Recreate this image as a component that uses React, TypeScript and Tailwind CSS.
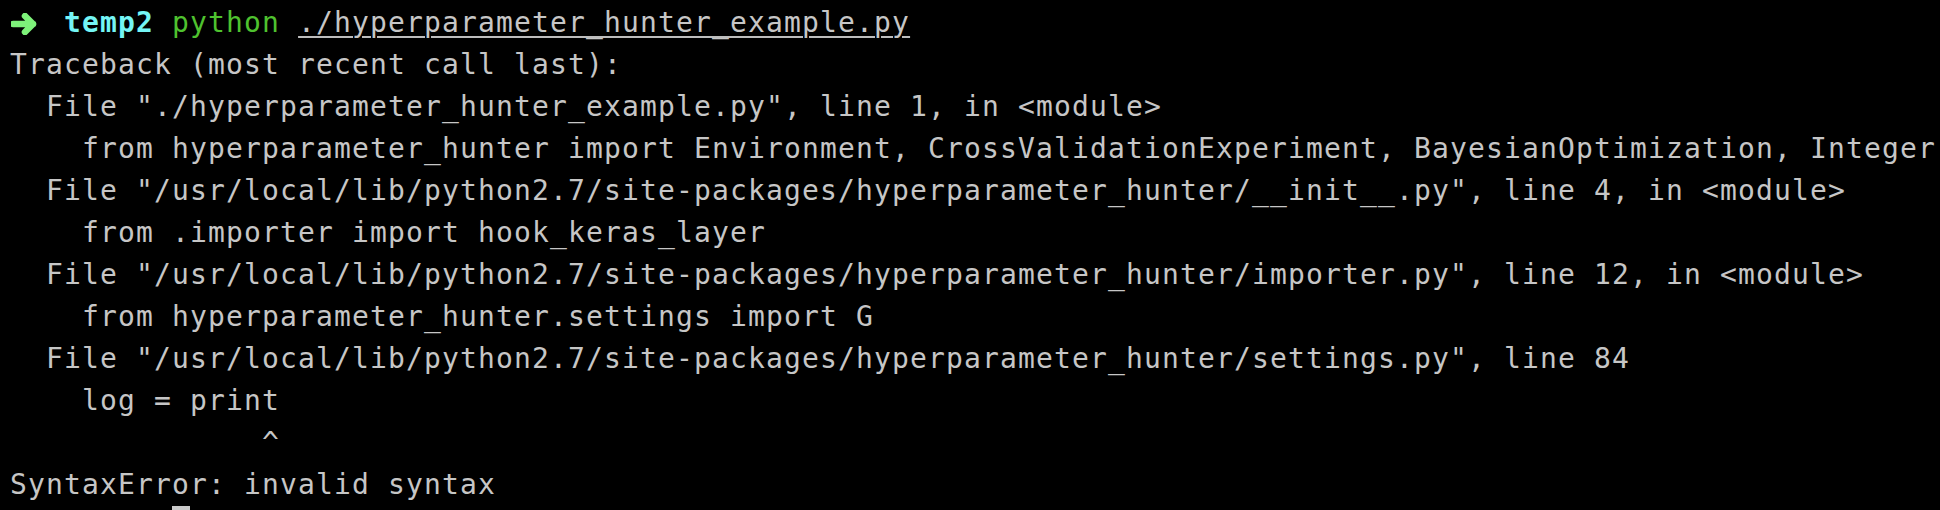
import React from "react";

const lines: string[] = [
  "Traceback (most recent call last):",
  '  File "./hyperparameter_hunter_example.py", line 1, in <module>',
  "    from hyperparameter_hunter import Environment, CrossValidationExperiment, BayesianOptimization, Integer",
  '  File "/usr/local/lib/python2.7/site-packages/hyperparameter_hunter/__init__.py", line 4, in <module>',
  "    from .importer import hook_keras_layer",
  '  File "/usr/local/lib/python2.7/site-packages/hyperparameter_hunter/importer.py", line 12, in <module>',
  "    from hyperparameter_hunter.settings import G",
  '  File "/usr/local/lib/python2.7/site-packages/hyperparameter_hunter/settings.py", line 84',
  "    log = print",
  "              ^",
  "SyntaxError: invalid syntax",
];

function Arrow() {
  return (
    <span className="inline-block w-[54px] h-[42px] align-top relative">
      <svg
        className="absolute left-[1px] top-[11px]"
        width="27"
        height="22"
        viewBox="0 0 27 22"
      >
        <path
          d="M2 11 H22 M14 3 L22 11 L14 19"
          stroke="#7ef27a"
          strokeWidth="6.5"
          strokeLinecap="round"
          strokeLinejoin="round"
          fill="none"
        />
      </svg>
    </span>
  );
}

export default function App() {
  return (
    <div className="w-full h-[510px] bg-black overflow-hidden">
      <div
        className="pl-[10px] pt-[2px] text-[28px] leading-[42px] tracking-[1.143px] text-[#c6c6c6] whitespace-pre"
        style={{ fontFamily: '"DejaVu Sans Mono", "Liberation Mono", monospace' }}
      >
        <div className="h-[42px]">
          <Arrow />
          <span className="font-bold text-[#74f5f5]">temp2</span>
          <span> </span>
          <span className="text-[#4fc22f]">python</span>
          <span> </span>
          <span className="underline decoration-[2px] underline-offset-[4px] decoration-[#bdbdbd]">
            ./hyperparameter_hunter_example.py
          </span>
        </div>
        {lines.map((l, i) => (
          <div key={i} className="h-[42px]">
            {l}
          </div>
        ))}
        <div className="h-[42px]">
          <span>{"         "}</span>
          <span className="inline-block w-[18px] h-[42px] align-top bg-[#c9c9c9]" />
        </div>
      </div>
    </div>
  );
}
